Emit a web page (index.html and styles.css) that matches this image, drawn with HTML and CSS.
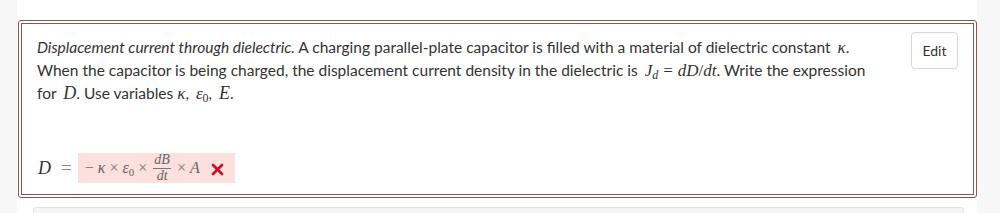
FILE: index.html
```html
<!DOCTYPE html>
<html lang="en">
<head>
    <meta charset="UTF-8">
    <title>Displacement current through dielectric</title>
    <link rel="stylesheet" href="styles.css">
</head>
<body>
    <div class="main">
        <div class="question">
            <button class="edit-btn">Edit</button>
            <p class="prompt">
                <em>Displacement current through dielectric.</em> A charging parallel-plate capacitor is filled with a material of dielectric constant <span class="m sp">&kappa;</span>.<br>
                When the capacitor is being charged, the displacement current density in the dielectric is <span class="m sp">J<sub>d</sub></span><span class="mr rel">=</span><span class="m">dD</span><span class="mr">/</span><span class="m">dt</span>. Write the expression<br>
                for <span class="m big sp">D</span>. Use variables <span class="m">&kappa;</span>, <span class="m sp">&epsilon;<sub class="up">0</sub></span>, <span class="m big sp">E</span>.
            </p>
            <div class="answer">
                <span class="m big lhs">D</span>
                <span class="eq">=</span>
                <div class="response">
                    <span class="op">&minus;</span><span class="m">&kappa;</span>
                    <span class="op">&times;</span>
                    <span class="m">&epsilon;<sub>0</sub></span>
                    <span class="op">&times;</span>
                    <span class="frac"><span class="m num">dB</span><span class="m">dt</span></span>
                    <span class="op">&times;</span>
                    <span class="m">A</span>
                    <svg class="wrong" width="13" height="13" viewBox="0 0 13 13">
                        <path d="M2 2 L11 11 M11 2 L2 11" stroke="#c8102e" stroke-width="2.8" stroke-linecap="round"/>
                    </svg>
                </div>
            </div>
        </div>
        <div class="next"></div>
    </div>
</body>
</html>
```

FILE: styles.css
```css
body {
    margin: 0;
    background-color: #f7f7f7;
    font-family: 'Lato', sans-serif;
    color: #333;
}
.main {
    margin-left: 17px;
    width: 960px;
    height: 213px;
    background-color: #fff;
    padding: 20px 0 0 1px;
    box-sizing: border-box;
    overflow: hidden;
}
.question {
    position: relative;
    width: 959px;
    height: 178px;
    box-sizing: border-box;
    border: 4px double #8a5650;
    border-radius: 3px;
    padding: 12px 15px 0 15px;
}
.edit-btn {
    position: absolute;
    top: 8px;
    right: 15px;
    width: 47px;
    height: 37px;
    background: #fff;
    border: 1px solid #d6d6d6;
    border-radius: 4px;
    font-family: 'Lato', sans-serif;
    font-size: 14px;
    color: #333;
    padding: 0;
}
.prompt {
    margin: 0;
    font-size: 15.5px;
    line-height: 23px;
    white-space: nowrap;
}
.m {
    font-family: 'Liberation Serif', serif;
    font-style: italic;
    font-size: 17px;
}
.m.sp {
    margin-left: 3px;
}
.mr {
    font-family: 'Liberation Serif', serif;
    font-size: 17px;
}
.mr.rel {
    margin: 0 5px;
}
.m.big {
    font-size: 18px;
}
sub {
    font-size: 12px;
    font-style: italic;
    vertical-align: -3px;
    line-height: 0;
}
sub.up {
    font-style: normal;
}
.answer {
    display: flex;
    align-items: center;
    margin-top: 48px;
    height: 30px;
}
.lhs {
    font-size: 19px;
    margin-left: 1px;
    color: #333;
}
.eq {
    font-family: 'Liberation Serif', serif;
    font-size: 19px;
    color: #888;
    margin: 0 6px 0 10px;
}
.response {
    display: flex;
    align-items: center;
    gap: 4px;
    height: 30px;
    padding: 0 11px 0 7px;
    background-color: #fbe0de;
    color: #666;
}
.response .m {
    font-size: 16px;
}
.response .op {
    font-family: 'Liberation Serif', serif;
    font-size: 16px;
    color: #777;
}
.response sub {
    font-size: 11px;
    font-style: normal;
}
.frac {
    display: flex;
    flex-direction: column;
    align-items: center;
    line-height: 14px;
    margin: 0 2px;
}
.frac .m {
    font-size: 14px;
}
.frac .num {
    border-bottom: 1px solid #777;
    padding: 0 1px 1px;
}
.wrong {
    margin-left: 7px;
    margin-top: 2px;
}
.next {
    margin: 9px 0 0 15px;
    width: 929px;
    height: 20px;
    border: 1px solid #e2e2e2;
    border-radius: 3px;
    background-color: #f5f5f5;
}
```
